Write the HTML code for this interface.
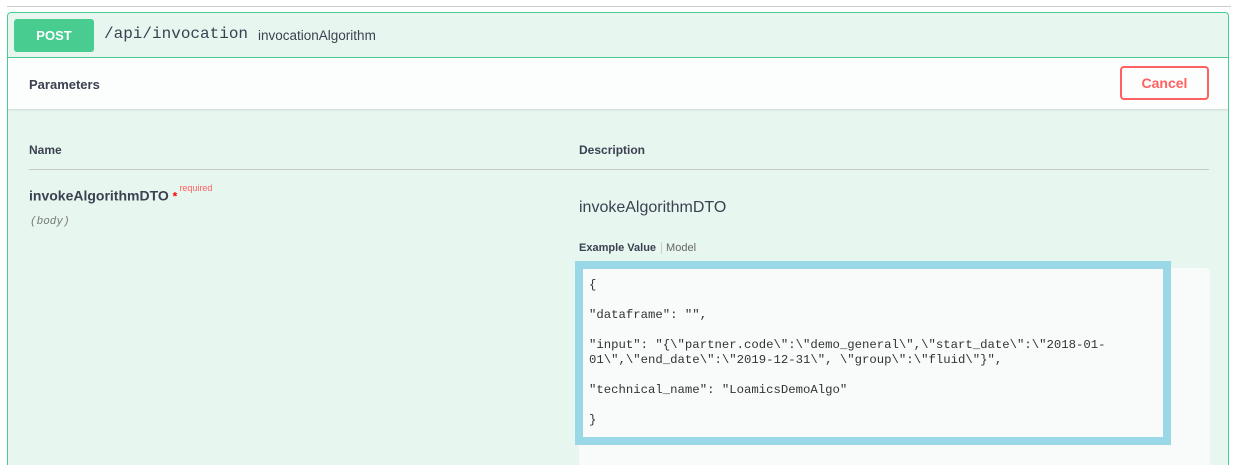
<!DOCTYPE html>
<html><head><meta charset="utf-8"><style>
*{margin:0;padding:0;box-sizing:border-box}
html,body{width:1238px;height:465px;overflow:hidden}
body{background:#fff;font-family:"Liberation Sans",sans-serif;color:#3b4151;position:relative}
.topline{position:absolute;left:7px;top:6px;width:1224px;height:1px;background:#ccc}
.op{position:absolute;left:7px;top:12px;width:1222px;height:453px;border:1px solid #49cc90;border-bottom:none;border-radius:4px 4px 0 0;background:#e8f6f0;overflow:hidden}
.hdr{position:absolute;left:0;top:0;width:100%;height:45px;border-bottom:1px solid #49cc90}
.post{position:absolute;left:6px;top:6px;width:80px;height:33px;background:#49cc90;border-radius:3px;color:#fff;font-weight:bold;font-size:13px;text-align:center;line-height:33px}
.path{position:absolute;left:96px;top:12px;font-family:"Liberation Mono",monospace;font-size:16px;color:#3b4151}
.sum{position:absolute;left:250px;top:15px;font-size:13.5px;color:#3b4151}
.params{position:absolute;left:0;top:45px;width:100%;height:51px;background:#fcfdfd;box-shadow:0 1px 2px rgba(0,0,0,.12)}
.params b{position:absolute;left:21px;top:19px;font-size:13px}
.cancel{position:absolute;left:1112px;top:8px;width:89px;height:34px;border:2px solid #ff6060;border-radius:4px;color:#ff6060;font-weight:bold;font-size:14px;text-align:center;line-height:30px}
.th{position:absolute;top:130px;font-size:12px;font-weight:bold}
.rule{position:absolute;left:21px;top:156px;width:1180px;height:1px;background:#c4cbc8}
.pname{position:absolute;left:21px;top:174px;font-size:14px;font-weight:bold}
.pname span{color:#f00;font-size:12px}
.pname sup{color:#ff6060;font-size:9px;font-weight:normal;position:relative;top:-4px;margin-left:2px}
.body{position:absolute;left:22px;top:203px;font-family:"Liberation Mono",monospace;font-style:italic;font-size:11px;color:#777}
.dto{position:absolute;left:571px;top:186px;font-size:16px;color:#3b4151}
.tabs{position:absolute;left:571px;top:229px;font-size:11px}
.tabs b{padding-right:5px;border-right:1px solid #ccc}
.tabs span{color:#666;padding-left:4px}
.bgbox{position:absolute;left:571px;top:255px;width:631px;height:198px;background:#f9fbfa;border-radius:4px 4px 0 0}
.ta{position:absolute;left:567px;top:248px;width:596px;height:184px;border:8px solid #9ad8e8;background:#f9fbfa;font-family:"Liberation Mono",monospace;font-size:12.3px;color:#333;padding:9px 0 0 6px;line-height:15px;white-space:pre;overflow:hidden}
</style></head><body>
<div class="topline"></div>
<div class="op">
 <div class="hdr"><div class="post">POST</div><div class="path">/api/invocation</div><div class="sum">invocationAlgorithm</div></div>
 <div class="params"><b>Parameters</b><div class="cancel">Cancel</div></div>
 <div class="th" style="left:21px">Name</div>
 <div class="th" style="left:571px">Description</div>
 <div class="rule"></div>
 <div class="pname">invokeAlgorithmDTO <span>*</span><sup>required</sup></div>
 <div class="body">(body)</div>
 <div class="dto">invokeAlgorithmDTO</div>
 <div class="tabs"><b>Example Value</b><span>Model</span></div>
 <div class="bgbox"></div>
 <div class="ta">{

"dataframe": "",

"input": "{\"partner.code\":\"demo_general\",\"start_date\":\"2018-01-
01\",\"end_date\":\"2019-12-31\", \"group\":\"fluid\"}",

"technical_name": "LoamicsDemoAlgo"

}</div>
</div>
</body></html>
